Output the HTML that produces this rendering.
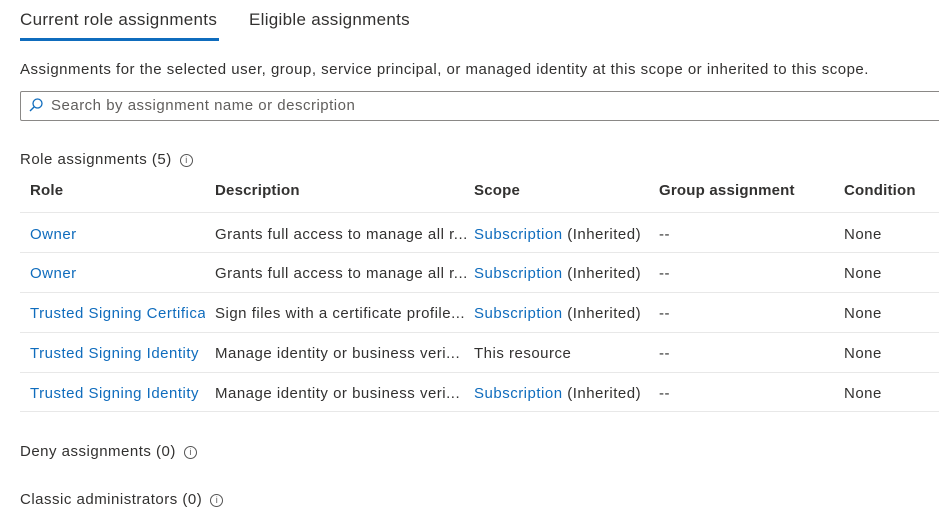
<!DOCTYPE html>
<html><head><style>
body{margin:0;width:939px;height:530px;overflow:hidden;background:#fff;font-family:"Liberation Sans",sans-serif;color:#323130;font-size:15px;letter-spacing:0.5px;position:relative}
.a{position:absolute;white-space:nowrap}
.l{color:#0f6cbd}
.b{font-weight:bold;letter-spacing:0.2px}
.sep{position:absolute;left:20px;width:919px;height:1px;background:#e8e8e8}
.info{display:inline-block;width:11px;height:11px;border:1px solid #555;border-radius:50%;font-size:9px;text-align:center;line-height:11px;vertical-align:1px;margin-left:8px;color:#555;letter-spacing:0}
</style></head><body>
<div class="a" style="left:20px;top:10px;font-size:17px;letter-spacing:0.3px">Current role assignments</div>
<div class="a" style="left:20px;top:38px;width:199px;height:3px;background:#0f6cbd"></div>
<div class="a" style="left:249px;top:10px;font-size:17px;letter-spacing:0.3px">Eligible assignments</div>
<div class="a" style="left:20px;top:61px;">Assignments for the selected user, group, service principal, or managed identity at this scope or inherited to this scope.</div>
<div class="a" style="left:20px;top:91px;width:930px;height:28px;border:1px solid #8a8886;border-radius:2px"></div>
<svg class="a" style="left:28px;top:97px" width="16" height="16" viewBox="0 0 16 16"><circle cx="9.5" cy="6.5" r="4.5" fill="none" stroke="#0f6cbd" stroke-width="1.3"/><path d="M6.3 9.7L2 14" stroke="#0f6cbd" stroke-width="1.4"/></svg>
<div class="a" style="left:51px;top:97px;color:#605e5c">Search by assignment name or description</div>
<div class="a" style="left:20px;top:151px;">Role assignments (5)<span class="info">i</span></div>
<div class="a b" style="left:30px;top:182px">Role</div>
<div class="a b" style="left:215px;top:182px">Description</div>
<div class="a b" style="left:474px;top:182px">Scope</div>
<div class="a b" style="left:659px;top:182px">Group assignment</div>
<div class="a b" style="left:844px;top:182px">Condition</div>
<div class="sep" style="top:212px"></div>
<div class="a l" style="left:30px;top:226px">Owner</div><div class="a" style="left:215px;top:226px">Grants full access to manage all r...</div><div class="a" style="left:474px;top:226px"><span class="l">Subscription</span> (Inherited)</div><div class="a" style="left:659px;top:226px">--</div><div class="a" style="left:844px;top:226px">None</div>
<div class="sep" style="top:252px"></div>
<div class="a l" style="left:30px;top:265px">Owner</div><div class="a" style="left:215px;top:265px">Grants full access to manage all r...</div><div class="a" style="left:474px;top:265px"><span class="l">Subscription</span> (Inherited)</div><div class="a" style="left:659px;top:265px">--</div><div class="a" style="left:844px;top:265px">None</div>
<div class="sep" style="top:292px"></div>
<div class="a l" style="left:30px;top:305px;width:175px;overflow:hidden">Trusted Signing Certificate Profile Signer</div><div class="a" style="left:215px;top:305px">Sign files with a certificate profile...</div><div class="a" style="left:474px;top:305px"><span class="l">Subscription</span> (Inherited)</div><div class="a" style="left:659px;top:305px">--</div><div class="a" style="left:844px;top:305px">None</div>
<div class="sep" style="top:332px"></div>
<div class="a l" style="left:30px;top:345px">Trusted Signing Identity</div><div class="a" style="left:215px;top:345px">Manage identity or business veri...</div><div class="a" style="left:474px;top:345px">This resource</div><div class="a" style="left:659px;top:345px">--</div><div class="a" style="left:844px;top:345px">None</div>
<div class="sep" style="top:372px"></div>
<div class="a l" style="left:30px;top:385px">Trusted Signing Identity</div><div class="a" style="left:215px;top:385px">Manage identity or business veri...</div><div class="a" style="left:474px;top:385px"><span class="l">Subscription</span> (Inherited)</div><div class="a" style="left:659px;top:385px">--</div><div class="a" style="left:844px;top:385px">None</div>
<div class="sep" style="top:411px"></div>
<div class="a" style="left:20px;top:443px;">Deny assignments (0)<span class="info">i</span></div>
<div class="a" style="left:20px;top:491px;">Classic administrators (0)<span class="info">i</span></div>
</body></html>
